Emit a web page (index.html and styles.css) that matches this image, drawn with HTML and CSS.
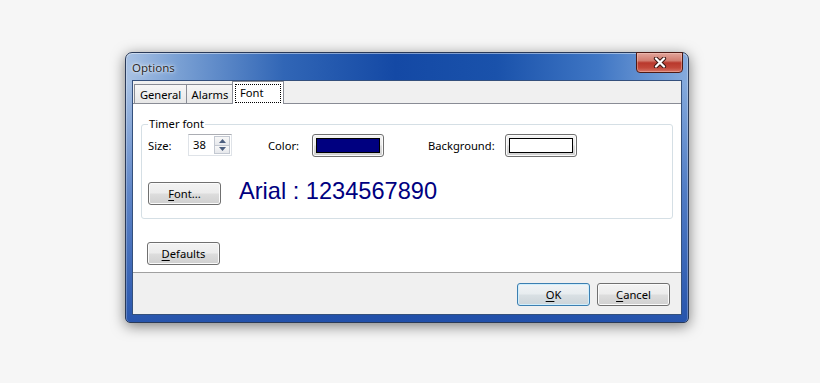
FILE: index.html
```html
<!DOCTYPE html>
<html>
<head>
<meta charset="utf-8">
<link rel="stylesheet" href="styles.css">
</head>
<body>
<div class="stage">
  <div class="window">
    <div class="titlebar">
      <span class="title">Options</span>
      <button class="close" aria-label="Close">
        <svg width="14" height="11" viewBox="0 0 14 11"><path d="M3 1.5L11 9.5M11 1.5L3 9.5" stroke="#3b1612" stroke-width="4.2" stroke-linecap="round"/><path d="M3 1.5L11 9.5M11 1.5L3 9.5" stroke="#ffffff" stroke-width="2.3" stroke-linecap="round"/></svg>
      </button>
    </div>
    <div class="client">
      <div class="tabs">
        <div class="tab tab-general">General</div>
        <div class="tab tab-alarms">Alarms</div>
        <div class="tab tab-font active"><span class="focus">Font</span></div>
      </div>
      <div class="panel">
        <fieldset class="group">
          <legend>Timer font</legend>
          <div class="row row-top">
            <span class="lbl lbl-size">Size:</span>
            <div class="spin">
              <span class="spin-val">38</span>
              <div class="spin-btns">
                <span class="spin-btn"><svg width="7" height="4" viewBox="0 0 7 4"><path d="M0 4L3.5 0L7 4Z" fill="#4c5f80"/></svg></span>
                <span class="spin-btn"><svg width="7" height="4" viewBox="0 0 7 4"><path d="M0 0L3.5 4L7 0Z" fill="#4c5f80"/></svg></span>
              </div>
            </div>
            <span class="lbl lbl-color">Color:</span>
            <button class="btn swatch-btn"><span class="swatch swatch-navy"></span></button>
            <span class="lbl lbl-bg">Background:</span>
            <button class="btn swatch-btn"><span class="swatch swatch-white"></span></button>
          </div>
          <div class="row row-font">
            <button class="btn"><u>F</u>ont...</button>
            <span class="preview">Arial : 1234567890</span>
          </div>
        </fieldset>
        <button class="btn btn-defaults"><u>D</u>efaults</button>
      </div>
      <div class="footer">
        <button class="btn btn-default"><u>O</u>K</button>
        <button class="btn"><u>C</u>ancel</button>
      </div>
    </div>
  </div>
</div>
</body>
</html>
```

FILE: styles.css
```css
html, body {
  margin: 0;
  padding: 0;
  background: #f6f6f6;
  font-family: "Noto Sans", "DejaVu Sans", sans-serif;
  font-size: 11.2px;
  color: #000;
  width: 820px;
  height: 383px;
  overflow: hidden;
}

.stage {
  padding: 52px 0 0 125px;
}

.window {
  box-sizing: border-box;
  width: 564px;
  height: 271px;
  border: 1px solid #2a3a58;
  border-radius: 7px 7px 5px 5px;
  padding: 0 6px 7px 6px;
  display: flex;
  flex-direction: column;
  box-shadow: 0 3px 14px rgba(0, 0, 0, 0.5), inset 0 1px 0 rgba(255, 255, 255, 0.45), inset 1px 0 0 rgba(255, 255, 255, 0.25), inset -1px 0 0 rgba(255, 255, 255, 0.25);
  background:
    linear-gradient(to bottom, rgba(38, 86, 176, 0) 0, rgba(38, 86, 176, 0) 30px, rgba(38, 86, 176, 0.55) 140px, rgba(34, 80, 170, 0.95) 100%),
    linear-gradient(to right, #a9c2e4 0%, #7ba1d4 9%, #3166b6 28%, #1449a5 48%, #1a52ab 66%, #3f76c4 84%, #86abdd 100%);
}

.titlebar {
  height: 27px;
  display: flex;
  justify-content: space-between;
  align-items: flex-start;
}

.title {
  padding-top: 7px;
  line-height: 15px;
  font-size: 11.5px;
  color: #2a2a2a;
  text-shadow: 0 0 5px rgba(255, 255, 255, 0.9), 0 0 2px rgba(255, 255, 255, 0.8);
}

.close {
  box-sizing: border-box;
  width: 47px;
  height: 21px;
  margin: -1px -1px 0 0;
  padding: 0;
  border: 1px solid #4d1a15;
  border-radius: 0 0 4px 4px;
  display: flex;
  align-items: center;
  justify-content: center;
  background: linear-gradient(to bottom, #e2a59b 0%, #d27d70 40%, #b9382c 52%, #c2483a 78%, #d77668 100%);
  box-shadow: inset 0 0 0 1px rgba(255, 220, 210, 0.35);
}

.client {
  flex: 1;
  border: 1px solid #34507c;
  background: #f0f0f0;
  display: flex;
  flex-direction: column;
}

.tabs {
  height: 22px;
  display: flex;
  align-items: flex-end;
  padding-left: 1px;
}

.tab {
  box-sizing: border-box;
  height: 19px;
  border: 1px solid #898c95;
  border-bottom: none;
  background: linear-gradient(to bottom, #f7f7f7, #e7e7e7);
  line-height: 17px;
  padding-top: 1px;
  text-align: center;
  margin-right: -1px;
}

.tab-general { width: 53px; }
.tab-alarms { width: 48px; }

.tab.active {
  position: relative;
  z-index: 1;
  width: 52px;
  height: 23px;
  margin: 0 0 -1px -1px;
  padding: 2px 2px 0 2px;
  background: #fff;
  text-align: left;
}

.focus {
  display: block;
  box-sizing: border-box;
  height: 19px;
  border: 1px dotted #000;
  padding-left: 4px;
  line-height: 15px;
}

.panel {
  box-sizing: border-box;
  height: 170px;
  background: #fff;
  border-top: 1px solid #898c95;
  border-bottom: 1px solid #a0a0a0;
  padding: 12px 8px 0 8px;
}

.group {
  margin: 0;
  padding: 0 6px 13px 6px;
  border: 1px solid #d5dfe5;
  border-radius: 3px;
  min-width: 0;
}

.group legend {
  padding: 0 1px;
  line-height: 16px;
}

.row {
  display: flex;
  align-items: center;
  height: 24px;
}

.row-top {
  margin-top: 1px;
}

.lbl-size { width: 40px; }
.lbl-color { width: 44px; margin-left: 36px; }
.lbl-bg { width: 77px; margin-left: 44px; }

.spin {
  box-sizing: border-box;
  width: 44px;
  height: 22px;
  border: 1px solid #dfe3e8;
  border-top-color: #abadb3;
  background: #fff;
  display: flex;
}

.spin-val {
  flex: 1;
  padding-left: 4px;
  line-height: 20px;
}

.spin-btns {
  width: 16px;
  display: flex;
  flex-direction: column;
  padding: 1px 1px 1px 0;
}

.spin-btn {
  flex: 1;
  box-sizing: border-box;
  border: 1px solid #c3c8d1;
  background: linear-gradient(to bottom, #f8f8f8, #e6e8ec);
  display: flex;
  align-items: center;
  justify-content: center;
}

.spin-btn + .spin-btn {
  border-top: none;
}

.btn {
  box-sizing: border-box;
  width: 73px;
  height: 23px;
  padding: 0;
  border: 1px solid #707070;
  border-radius: 3px;
  background: linear-gradient(to bottom, #f3f3f3 0%, #ececec 48%, #dddddd 52%, #d0d0d0 100%);
  box-shadow: inset 0 0 0 1px #fbfbfb;
  font: inherit;
  color: #000;
  display: flex;
  align-items: center;
  justify-content: center;
}

.btn u {
  text-decoration: underline;
  text-underline-offset: 2px;
}

.swatch-btn {
  width: 72px;
}

.swatch {
  box-sizing: border-box;
  width: 64px;
  height: 15px;
  border: 1px solid #000;
}

.swatch-navy { background: #000080; }
.swatch-white { background: #fff; }

.row-font {
  margin-top: 24px;
}

.preview {
  margin-left: 18px;
  margin-top: -3px;
  font-family: "Liberation Sans", Arial, sans-serif;
  font-size: 23.6px;
  color: #000080;
}

.btn-defaults {
  margin: 23px 0 0 6px;
}

.footer {
  flex: 1;
  display: flex;
  justify-content: flex-end;
  align-items: flex-start;
  gap: 7px;
  padding: 10px 11px 0 0;
}

.btn-default {
  border-color: #3c7fb1;
  box-shadow: inset 0 0 0 1px #d0eefc;
  background: linear-gradient(to bottom, #f1f4f6 0%, #e7ecef 48%, #d9e0e4 52%, #ccd4d9 100%);
}
```
